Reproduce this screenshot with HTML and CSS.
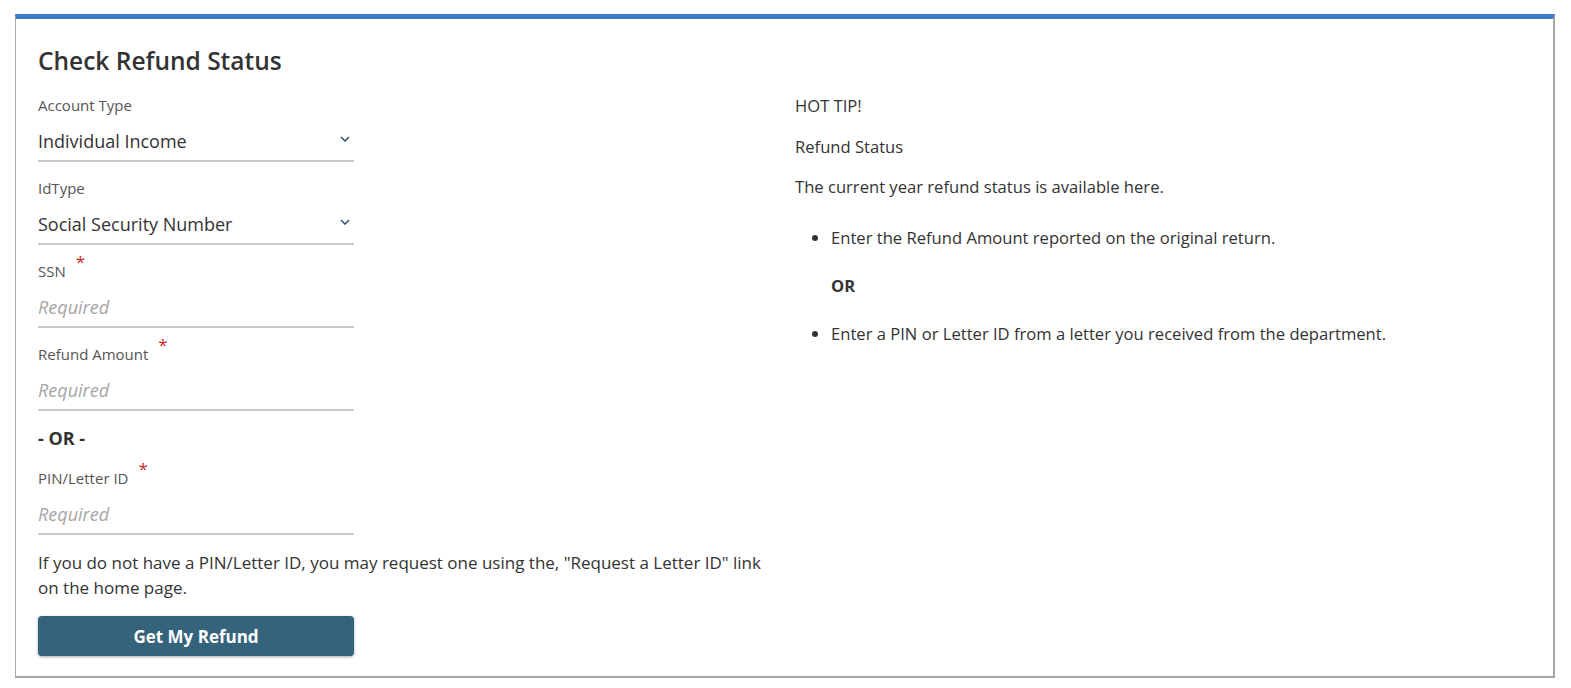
FILE: index.html
```html
<!DOCTYPE html>
<html lang="en">
<head>
<meta charset="utf-8">
<title>Check Refund Status</title>
<link rel="stylesheet" href="styles.css">
</head>
<body>
<div class="page">
  <section class="card">
    <h1 class="title">Check Refund Status</h1>
    <div class="cols">
      <form class="form">
        <div class="field">
          <label class="label">Account Type</label>
          <div class="select">
            <span>Individual Income</span>
            <svg class="chev" width="10" height="6" viewBox="0 0 10 6"><path d="M1 1 L5 5 L9 1" fill="none" stroke="#3b5570" stroke-width="1.6"/></svg>
          </div>
        </div>
        <div class="field">
          <label class="label">IdType</label>
          <div class="select">
            <span>Social Security Number</span>
            <svg class="chev" width="10" height="6" viewBox="0 0 10 6"><path d="M1 1 L5 5 L9 1" fill="none" stroke="#3b5570" stroke-width="1.6"/></svg>
          </div>
        </div>
        <div class="field">
          <label class="label">SSN<span class="req">*</span></label>
          <div class="input"><span class="ph">Required</span></div>
        </div>
        <div class="field">
          <label class="label">Refund Amount<span class="req">*</span></label>
          <div class="input"><span class="ph">Required</span></div>
        </div>
        <div class="or">- OR -</div>
        <div class="field">
          <label class="label">PIN/Letter ID<span class="req">*</span></label>
          <div class="input"><span class="ph">Required</span></div>
        </div>
        <p class="note">If you do not have a PIN/Letter ID, you may request one using the, "Request a Letter ID" link on the home page.</p>
        <button type="button" class="btn">Get My Refund</button>
      </form>
      <aside class="tip">
        <p>HOT TIP!</p>
        <p>Refund Status</p>
        <p>The current year refund status is available here.</p>
        <ul>
          <li>Enter the Refund Amount reported on the original return.</li>
        </ul>
        <p class="tip-or">OR</p>
        <ul class="last">
          <li>Enter a PIN or Letter ID from a letter you received from the department.</li>
        </ul>
      </aside>
    </div>
  </section>
</div>
</body>
</html>
```
FILE: styles.css
```css
* { box-sizing: border-box; }
html, body { margin: 0; padding: 0; background: #fff; }
body {
  font-family: "Open Sans", "Noto Sans", sans-serif;
  color: #333;
}
.page {
  padding: 14px 16px 0 15px;
}
.card {
  border-top: 5px solid #3f7dca;
  border-left: 1px solid #aaa;
  border-right: 2px solid #a8a8a0;
  border-bottom: 2px solid #a8a8a0;
  height: 664px;
  padding: 26px 22px 0 22px;
}
.title {
  margin: 0;
  font-size: 24.5px;
  font-weight: 600;
  line-height: 32px;
  color: #333;
}
.cols {
  display: grid;
  grid-template-columns: 756px 1fr;
  margin-top: 18px;
}
.form {
  width: 756px;
}
.field {
  width: 316px;
  margin-bottom: 16px;
}
.label {
  display: block;
  font-size: 15px;
  line-height: 20px;
  color: #555;
}
.req {
  color: #d21f1f;
  font-size: 17px;
  position: relative;
  top: -9px;
  margin-left: 10px;
}
.select, .input {
  height: 47px;
  border-bottom: 2px solid #c8c8c8;
  display: flex;
  align-items: center;
  justify-content: space-between;
  font-size: 18px;
  color: #333;
  padding-top: 6px;
}
.chev { margin-right: 4px; margin-top: -4px; }
.ph {
  font-style: italic;
  color: #a5a5a5;
}
.or {
  font-size: 18px;
  font-weight: 700;
  line-height: 22px;
  margin: 0 0 19px;
}
.note {
  font-size: 17px;
  line-height: 25px;
  margin: -1px 0 16px;
  width: 740px;
}
.btn {
  display: block;
  width: 316px;
  height: 40px;
  border: 0;
  border-radius: 4px;
  background: #34637b;
  color: #fff;
  font-family: inherit;
  font-size: 17px;
  font-weight: 700;
  box-shadow: 0 1px 3px rgba(0,0,0,0.35);
}
.tip {
  font-size: 16.6px;
  line-height: 22px;
  color: #333;
  padding-left: 1px;
}
.tip p { margin: 0 0 18.5px; }
.tip ul { margin: 29px 0 0; padding-left: 36px; }
.tip li { margin: 0; }
.tip .tip-or { font-weight: 700; margin: 26px 0 0 36px; }
.tip ul.last { margin-top: 26px; }
```
